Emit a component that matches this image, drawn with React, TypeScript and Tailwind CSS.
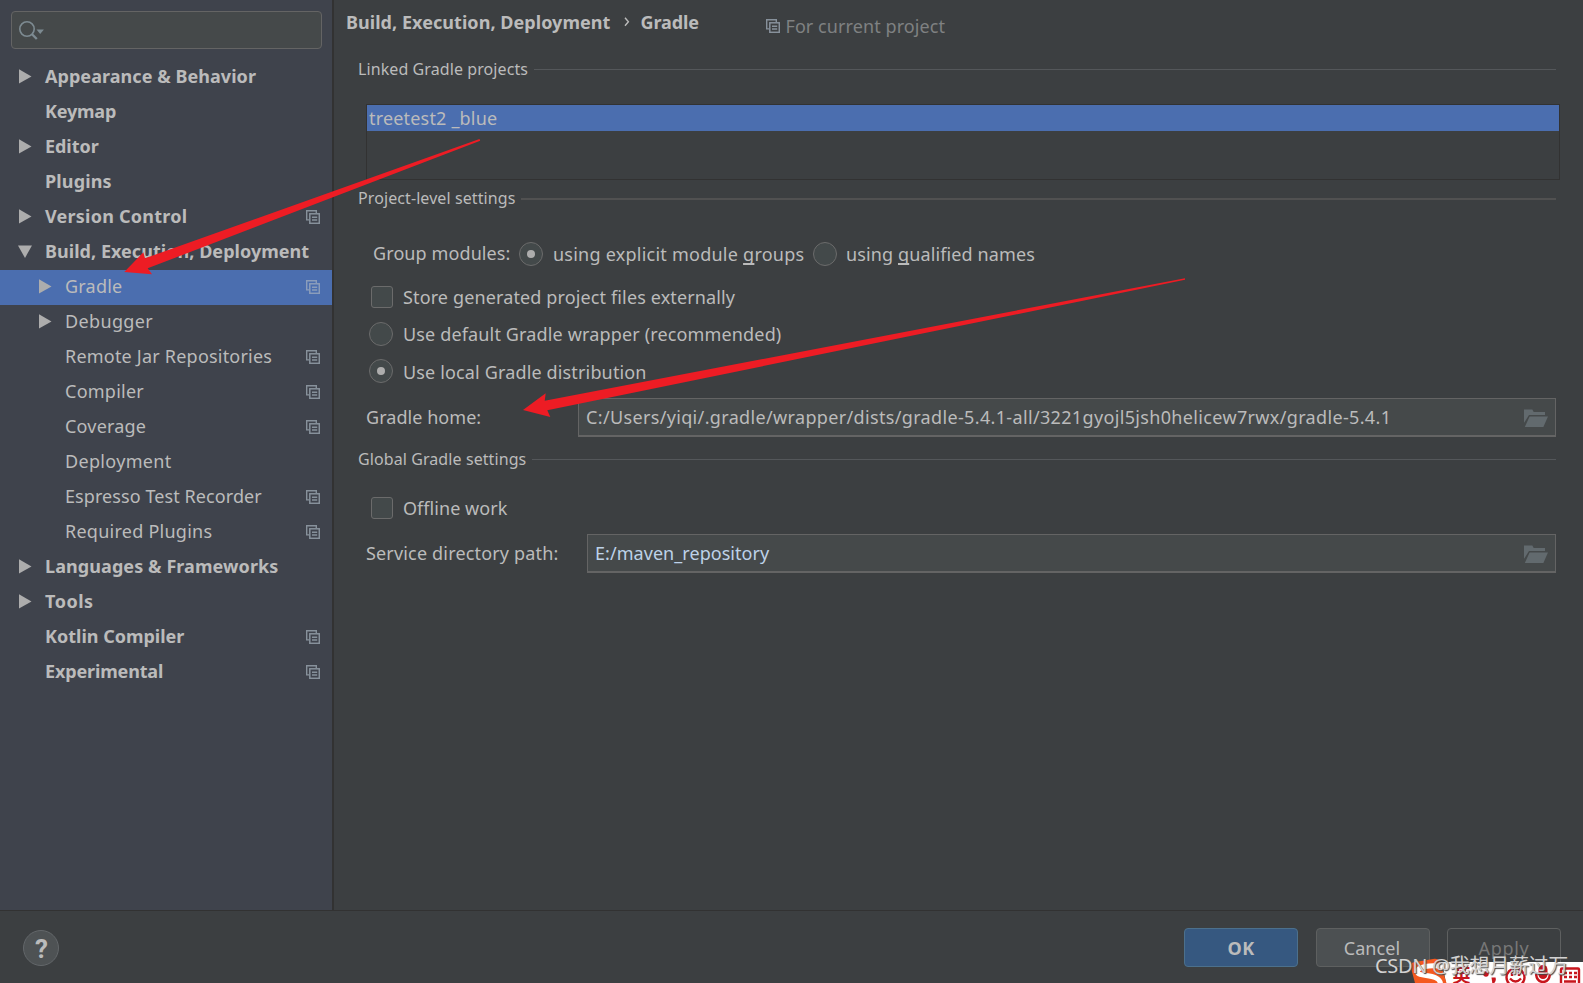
import type { ReactNode } from 'react';
import clsx from 'clsx';

type TreeItem = {
  label: string;
  tracking: string;
  arrow?: 'right' | 'down';
  child?: boolean;
  project?: boolean;
  selected?: boolean;
};

const treeItems: TreeItem[] = [
  { label: 'Appearance & Behavior', tracking: 'tracking-[0.05px]', arrow: 'right' },
  { label: 'Keymap', tracking: 'tracking-[-0.2px]' },
  { label: 'Editor', tracking: 'tracking-[-0.05px]', arrow: 'right' },
  { label: 'Plugins', tracking: 'tracking-[0.15px]' },
  { label: 'Version Control', tracking: 'tracking-[0.23px]', arrow: 'right', project: true },
  { label: 'Build, Execution, Deployment', tracking: 'tracking-[0.04px]', arrow: 'down' },
  { label: 'Gradle', tracking: 'tracking-[0.2px]', arrow: 'right', child: true, project: true, selected: true },
  { label: 'Debugger', tracking: 'tracking-[0.35px]', arrow: 'right', child: true },
  { label: 'Remote Jar Repositories', tracking: 'tracking-[0.21px]', child: true, project: true },
  { label: 'Compiler', tracking: 'tracking-[0.25px]', child: true, project: true },
  { label: 'Coverage', tracking: 'tracking-[0.2px]', child: true, project: true },
  { label: 'Deployment', tracking: 'tracking-[0.33px]', child: true },
  { label: 'Espresso Test Recorder', tracking: 'tracking-[0.08px]', child: true, project: true },
  { label: 'Required Plugins', tracking: 'tracking-[0.25px]', child: true, project: true },
  { label: 'Languages & Frameworks', tracking: 'tracking-[0.08px]', arrow: 'right' },
  { label: 'Tools', tracking: 'tracking-[0.5px]', arrow: 'right' },
  { label: 'Kotlin Compiler', tracking: 'tracking-[0px]', project: true },
  { label: 'Experimental', tracking: 'tracking-[-0.15px]', project: true },
];

function ProjectIcon({ className }: { className?: string }) {
  return (
    <svg width="14" height="14" viewBox="0 0 14 14" fill="none" stroke="currentColor" className={clsx('shrink-0', className)}>
      <path d="M3 9.9H.7V.7H10.300V3" strokeWidth="1.4" />
      <rect x="3.8" y="3.8" width="9.5" height="9.5" strokeWidth="1.5" />
      <path d="M6 7.200h5.200M6 10h5.200" strokeWidth="1.4" />
    </svg>
  );
}

function FolderIcon() {
  return (
    <svg width="24" height="18" viewBox="0 0 24 18" fill="#626a6e" className="mt-px shrink-0">
      <path d="M0 .5h8.3l1.4 2.5H21v3H5L.3 13.5H0z" />
      <path d="M5.6 7.5H24L19.4 18H.8z" />
    </svg>
  );
}

function TreeArrow({ dir }: { dir?: 'right' | 'down' }) {
  return (
    <svg width="14" height="15" viewBox="0 0 14 15" fill="#adadad" className="shrink-0">
      {dir === 'right' && <path d="M1 .3 13.5 7.5 1 14.5z" />}
      {dir === 'down' && <path d="M0 1.6h14L7 13.9z" />}
    </svg>
  );
}

function TreeRow({ item }: { item: TreeItem }) {
  return (
    <div
      className={clsx(
        'flex h-[35px] shrink-0 items-start pr-3',
        item.child ? 'pl-[38px]' : 'pl-[18px]',
        item.selected && 'bg-[#4b6eaf]',
      )}
    >
      <span className="flex h-[33px] items-center">
        <TreeArrow dir={item.arrow} />
      </span>
      <span className={clsx('ml-[13px] grow whitespace-nowrap leading-8', item.tracking, !item.child && 'font-bold')}>
        {item.label}
      </span>
      {item.project && <ProjectIcon className={clsx('mt-[10px]', item.selected ? 'text-[#8b9dbb]' : 'text-[#87919b]')} />}
    </div>
  );
}

function Radio({ checked }: { checked?: boolean }) {
  return (
    <span className="flex size-6 shrink-0 items-center justify-center rounded-full border border-[#6b6b6b] bg-[#43494a]">
      {checked && <span className="size-2 rounded-full bg-[#adadad]" />}
    </span>
  );
}

function Checkbox() {
  return <span className="ml-[2px] size-[22px] shrink-0 rounded-[3px] border border-[#6b6b6b] bg-[#43494a]" />;
}

function SectionTitle({ children, thick }: { children: ReactNode; thick?: boolean }) {
  return (
    <div className="flex h-6 items-center">
      <span className="whitespace-nowrap text-base leading-6 tracking-[0.09px]">{children}</span>
      <span className={clsx('ml-[6px] grow', thick ? 'mt-px h-[2px] bg-[#515151]' : 'h-px bg-[#54575a]')} />
    </div>
  );
}

function PathField({ value, className }: { value: string; className: string }) {
  return (
    <div className={clsx('flex h-[39px] items-center justify-between border border-b-2 border-[#646464] bg-[#45494a] pl-[7px] pr-[7px]', className)}>
      <span className="whitespace-pre leading-6">{value}</span>
      <FolderIcon />
    </div>
  );
}

function Mnemonic({ children }: { children: string }) {
  return <span className="underline decoration-2 underline-offset-[2px] [text-decoration-skip-ink:none]">{children}</span>;
}

function Sidebar() {
  return (
    <aside className="flex w-[334px] shrink-0 flex-col border-r-2 border-[#323232] bg-[#3f434c]">
      <div className="mx-[11px] mb-[11px] mt-[11px] flex h-[38px] w-[311px] shrink-0 items-center rounded border border-[#646464] bg-[#45494a] pl-[6px]">
        <svg width="27" height="22" viewBox="0 0 27 22" fill="none" stroke="#7d8b92" className="mt-px">
          <circle cx="9" cy="9" r="7.2" strokeWidth="1.6" />
          <path d="m13.8 14 5 5" strokeWidth="2.4" />
          <path d="M18.5 9.5h7.4L22.2 14z" fill="#7d8b92" stroke="none" />
        </svg>
      </div>
      {treeItems.map((item) => (
        <TreeRow key={item.label} item={item} />
      ))}
    </aside>
  );
}

function GradleSettings() {
  return (
    <main className="flex grow flex-col pl-6 pr-[27px]">
      <div className="-ml-3 flex h-[57px] items-start pt-[10px]">
        <span className="whitespace-nowrap font-bold leading-6 tracking-[0.05px]">Build, Execution, Deployment</span>
        <svg width="6" height="10" viewBox="0 0 6 10" fill="none" stroke="#bbbbbb" strokeWidth="1.4" className="ml-[14px] mt-[7px] shrink-0">
          <path d="M1 .8 4.4 4.8 1 8.8" />
        </svg>
        <span className="ml-[10px] w-[126px] font-bold leading-6 tracking-[-0.1px]">Gradle</span>
        <ProjectIcon className="mt-[9px] text-[#87919b]" />
        <span className="ml-[5px] mt-1 leading-6 tracking-[0.08px] text-[#7f8182]">For current project</span>
      </div>

      <SectionTitle>Linked Gradle projects</SectionTitle>
      <div className="-mr-1 ml-2 mt-[23px] h-[76px] border border-[#323232]">
        <div className="h-[26px] bg-[#4b6eaf] pl-[2px] leading-[26px] tracking-[0.18px]">treetest2 _blue</div>
      </div>

      <div className="mt-[6px]">
        <SectionTitle thick>Project-level settings</SectionTitle>
      </div>

      <div className="ml-[15px] mt-8 flex h-6 items-center">
        <span className="-mt-[2px] w-[146px] whitespace-nowrap leading-6 tracking-[0.1px]">Group modules:</span>
        <Radio checked />
        <span className="ml-[10px] w-[260px] whitespace-nowrap leading-6 tracking-[0.24px]">
          using explicit module <Mnemonic>g</Mnemonic>roups
        </span>
        <Radio />
        <span className="ml-[9px] whitespace-nowrap leading-6 tracking-[0.12px]">
          using <Mnemonic>q</Mnemonic>ualified names
        </span>
      </div>
      <div className="ml-[11px] mt-[19px] flex h-6 items-center">
        <Checkbox />
        <span className="-mt-px ml-[10px] whitespace-nowrap leading-6 tracking-[0.13px]">Store generated project files externally</span>
      </div>
      <div className="ml-[11px] mt-[13px] flex h-6 items-center">
        <Radio />
        <span className="-mt-px ml-[10px] whitespace-nowrap leading-6 tracking-[0.15px]">Use default Gradle wrapper (recommended)</span>
      </div>
      <div className="ml-[11px] mt-[13px] flex h-6 items-center">
        <Radio checked />
        <span className="ml-[10px] mt-px whitespace-nowrap leading-6 tracking-[0.15px]">Use local Gradle distribution</span>
      </div>

      <div className="ml-2 mt-[15px] flex items-center">
        <span className="-mt-[2px] w-[212px] leading-6 tracking-[0.05px]">Gradle home:</span>
        <PathField
          className="grow tracking-[0.345px]"
          value="C:/Users/yiqi/.gradle/wrapper/dists/gradle-5.4.1-all/3221gyojl5jsh0helicew7rwx/gradle-5.4.1"
        />
      </div>

      <div className="mt-[10px]">
        <SectionTitle>Global Gradle settings</SectionTitle>
      </div>
      <div className="ml-[11px] mt-[25px] flex h-6 items-center">
        <Checkbox />
        <span className="-mt-px ml-[10px] whitespace-nowrap leading-6 tracking-[0.05px]">Offline work</span>
      </div>
      <div className="ml-2 mt-[14px] flex items-center">
        <span className="-mt-[2px] w-[221px] leading-6 tracking-[0.17px]">Service directory path:</span>
        <PathField className="grow tracking-[0.05px] text-[#bdd2e8]" value="E:/maven_repository" />
      </div>
    </main>
  );
}

function Footer() {
  const button = 'flex h-[39px] w-[114px] items-center justify-center rounded-[4px] border pt-px';
  return (
    <footer className="flex h-[73px] shrink-0 items-start border-t border-[#323232] pl-[23px] pr-[22px]">
      <div className="mt-[19px] flex size-9 items-center justify-center rounded-full border border-[#63676a] bg-[#4e5254]">
        <span className="mt-px pl-px font-['Roboto'] text-[26px] font-bold leading-6">?</span>
      </div>
      <div className="ml-auto mt-[17px] flex gap-[17.5px]">
        <button className={clsx(button, 'border-[#4c708c] bg-[#365880] font-bold tracking-[0.5px]')}>OK</button>
        <button className={clsx(button, 'border-[#5e6060] bg-[#4c5052] pr-px tracking-[0.1px]')}>Cancel</button>
        <button className={clsx(button, 'border-[#5e6060] tracking-[0.7px] text-[#777777]')}>Apply</button>
      </div>
    </footer>
  );
}

function ImeBar() {
  return (
    <svg width="173" height="26" viewBox="0 0 173 26" className="absolute bottom-0 right-0 overflow-hidden">
      <path d="M32 5h141v21H36z" fill="#ffffff" />
      <path d="M.7 10Q.5 6 4 5.300L23 2q5-1 7 3L36.500 26H5z" fill="#f4591f" />
      <path d="M33 9.500C20 7.500 7 9.500 7.500 15S30 16 30.500 27" fill="none" stroke="#ffffff" strokeWidth="5" />
      <text x="42.500" y="25" fontSize="18" fontWeight="700" fill="#c8161d" fontFamily="Noto Sans CJK SC, sans-serif">
        英
      </text>
      <g fill="#c8161d">
        <circle cx="76" cy="17" r="2.700" />
        <path d="M81.500 20.500h4c1 3-.5 5.500-3 7z" />
        <rect x="128.500" y="8" width="9" height="14" rx="4.500" />
      </g>
      <g fill="none" stroke="#c8161d" strokeWidth="2.400">
        <circle cx="105.500" cy="20.500" r="9" />
        <path d="M102 15v4M109 15v4M100 21.500q5.500 6 11 0M126 17q1 8 7 8t7-8" />
        <rect x="151" y="11.500" width="18" height="17" rx="1" />
        <path d="M154 16h3M159 16h3M164 16h3M154 20h3M159 20h3M164 20h3M154 24.500h12" />
      </g>
    </svg>
  );
}

function Arrows() {
  return (
    <svg width="1583" height="983" viewBox="0 0 1583 983" fill="#ed1c24" className="pointer-events-none absolute inset-0">
      <path d="M124.300 272 143.300 252.300 145 258.300 479.500 139 480.200 140.800 147.700 268.300 152 274.300z" />
      <path d="M523 410 545.700 393.300 544.700 400.700 1185 278.300 1185 279.800 547.300 410.300 550.300 417z" />
    </svg>
  );
}

export default function App() {
  return (
    <div className="relative flex h-[983px] w-[1583px] flex-col overflow-hidden bg-[#3c3f41] font-['Noto_Sans','Noto_Sans_CJK_SC',sans-serif] text-lg text-[#bbbbbb]">
      <div className="flex h-[910px] shrink-0">
        <Sidebar />
        <GradleSettings />
      </div>
      <Footer />
      <Arrows />
      <ImeBar />
      <div className="absolute bottom-[5px] right-[15px] whitespace-nowrap text-[20px] leading-6 tracking-[-0.3px] text-[#d2d2d2] [text-shadow:1px_1px_1px_#444444]">
        CSDN @我想月薪过万
      </div>
    </div>
  );
}
